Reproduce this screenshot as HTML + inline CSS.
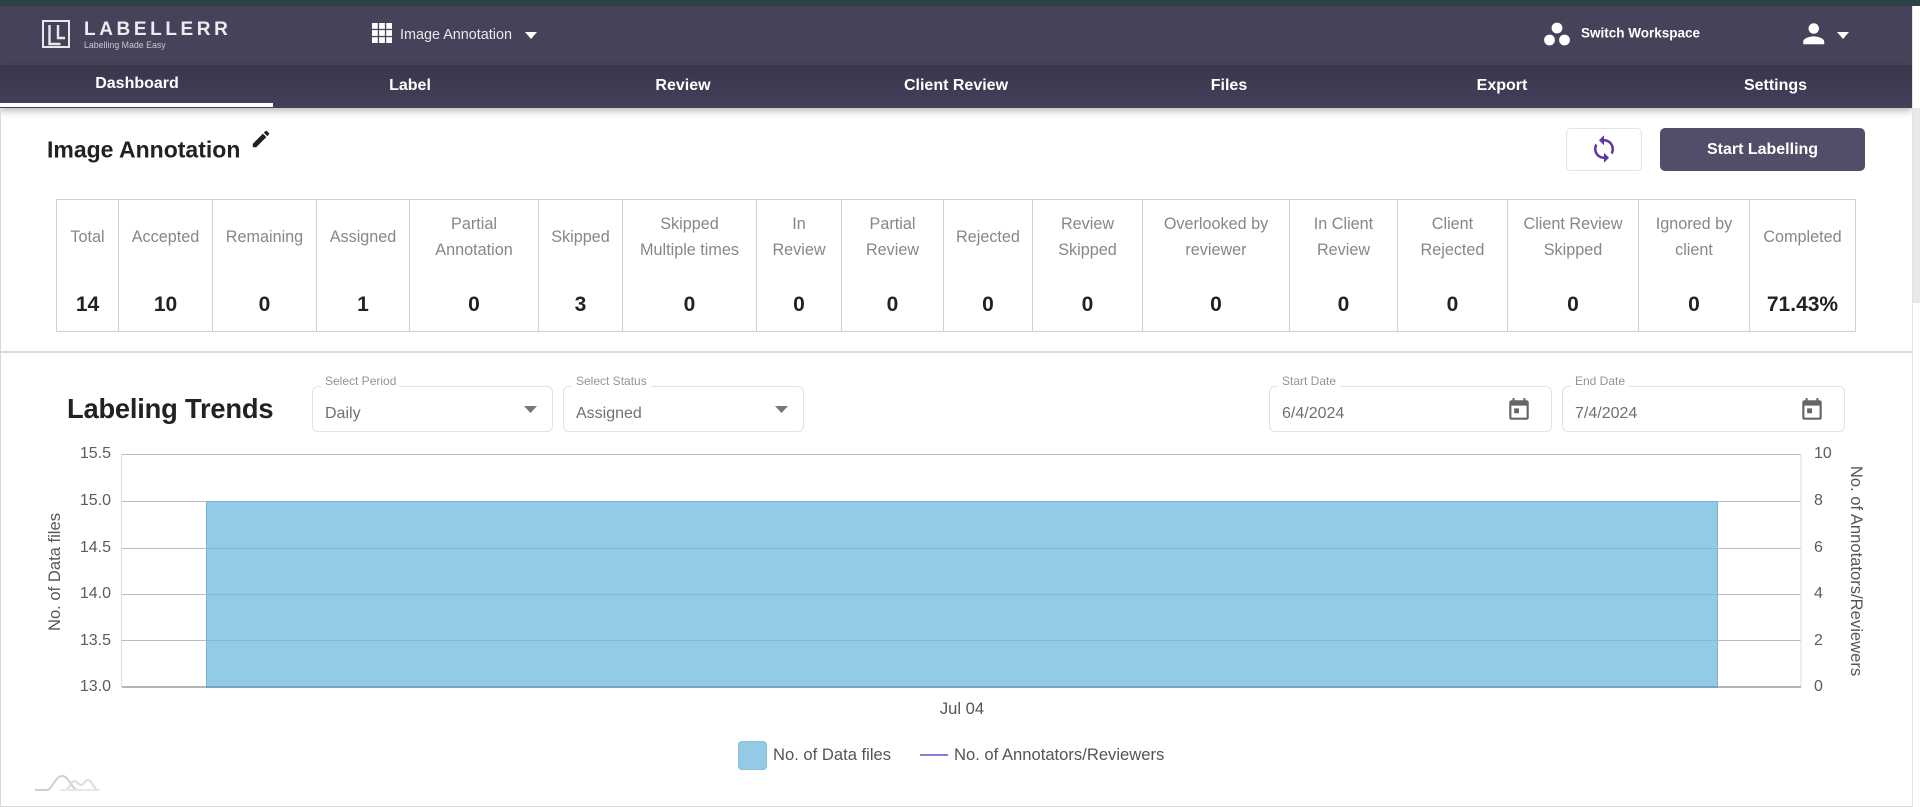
<!DOCTYPE html>
<html lang="en"><head><meta charset="utf-8"><title>Labellerr</title>
<style>
html,body{margin:0;padding:0;width:1920px;height:807px;overflow:hidden;background:#fff;font-family:"Liberation Sans",sans-serif}
.a{position:absolute;white-space:nowrap}
.c{transform:translate(-50%,-50%)}
.m{transform:translateY(-50%)}
.nav{top:86px;font-size:16px;font-weight:700;color:#fff}
.cell{position:absolute;top:199px;height:132px;border-right:1px solid #d0d0d0;box-sizing:border-box}
.lb{position:absolute;left:0;right:0;text-align:center;font-size:16.2px;color:#878787;line-height:26px;white-space:nowrap}
.v{position:absolute;left:0;right:0;top:92.500px;text-align:center;font-size:21px;font-weight:700;color:#222;line-height:26px}
.box{position:absolute;top:386px;height:46px;box-sizing:border-box;border:1px solid #e2e2e2;border-radius:6px;background:#fff}
.fl{position:absolute;top:374px;font-size:12px;color:#949494;background:#fff;padding:0 4px;line-height:14px}
.val{position:absolute;top:405px;font-size:16px;color:#707070;line-height:18px}
.tk{font-size:16px;color:#5c5c5c;line-height:18px}
.ax{font-size:16.600px;color:#555}
svg{position:absolute;display:block}
</style></head><body>
<div class="a" style="left:0;top:0;width:1920px;height:6px;background:#2a4445"></div>
<div class="a" style="left:0;top:6px;width:1912px;height:59px;background:linear-gradient(#45415a,#474359)"></div>
<div class="a" style="left:0;top:65px;width:1912px;height:43px;background:linear-gradient(#3a364b,#433f59);box-shadow:0 3px 7px rgba(0,0,0,.28)"></div>
<div class="a" style="left:0;top:103px;width:273px;height:4px;background:#fff"></div>
<div class="a" style="left:1912px;top:6px;width:8px;height:801px;background:#fff;border-left:1px solid #e4e4e4;box-sizing:border-box"></div>
<div class="a" style="left:1913px;top:108px;width:7px;height:195px;background:#e9e9e9"></div>
<div class="a" style="left:0;top:108px;width:1px;height:699px;background:#d8d8d8"></div>
<div class="a" style="left:0;top:806px;width:1912px;height:1px;background:#d8d8d8"></div>

<svg style="left:40px;top:18px" width="32" height="32" viewBox="0 0 32 32" fill="none" stroke="#e8e8ec"><rect x="3" y="3" width="26" height="26" stroke-width="2"/><path d="M9.500 7v19h11M18 7v13h7" stroke-width="2.400"/></svg>
<div class="a" style="left:84px;top:19px;font-size:19px;font-weight:700;line-height:22px;letter-spacing:3.600px;color:#ececf0">LABELLERR</div>
<div class="a" style="left:84px;top:39px;font-size:8.800px;line-height:12px;color:#c9c8d2">Labelling Made Easy</div>
<svg style="left:372px;top:23px" width="20" height="20" fill="#fff"><rect width="5.800" height="5.800"/><rect x="7.100" width="5.800" height="5.800"/><rect x="14.200" width="5.800" height="5.800"/><rect y="7.100" width="5.800" height="5.800"/><rect x="7.100" y="7.100" width="5.800" height="5.800"/><rect x="14.200" y="7.100" width="5.800" height="5.800"/><rect y="14.200" width="5.800" height="5.800"/><rect x="7.100" y="14.200" width="5.800" height="5.800"/><rect x="14.200" y="14.200" width="5.800" height="5.800"/></svg>
<div class="a m" style="left:400px;top:35px;font-size:14.400px;color:#e8e8ee">Image Annotation</div>
<svg style="left:525px;top:32px" width="12" height="7"><path d="M0 0h12L6 7z" fill="#fff"/></svg>
<svg style="left:1544px;top:22px" width="26" height="24" fill="#fff"><circle cx="13" cy="6" r="5.400"/><circle cx="5.500" cy="18" r="5.400"/><circle cx="20.500" cy="18" r="5.400"/></svg>
<div class="a m" style="left:1581px;top:33px;font-size:13.500px;font-weight:700;color:#fff">Switch Workspace</div>
<svg style="left:1798px;top:18px" width="31.500" height="31.500" viewBox="0 0 24 24" fill="#fff"><path d="M12 12c2.210 0 4-1.790 4-4s-1.790-4-4-4-4 1.790-4 4 1.790 4 4 4zm0 2c-2.670 0-8 1.340-8 4v2h16v-2c0-2.660-5.330-4-8-4z"/></svg>
<svg style="left:1837px;top:32px" width="12" height="7"><path d="M0 0h12L6 7z" fill="#fff"/></svg>

<div class="a nav c" style="left:137px;top:84px">Dashboard</div>
<div class="a nav c" style="left:410px">Label</div>
<div class="a nav c" style="left:683px">Review</div>
<div class="a nav c" style="left:956px">Client Review</div>
<div class="a nav c" style="left:1229px">Files</div>
<div class="a nav c" style="left:1502px">Export</div>
<div class="a nav c" style="left:1775.500px">Settings</div>

<div class="a m" style="left:47px;top:150px;font-size:23px;font-weight:700;color:#222">Image Annotation</div>
<svg style="left:250px;top:128px" width="22" height="22" viewBox="0 0 24 24" fill="#1f1f1f"><path d="M3 17.250V21h3.750L17.810 9.940l-3.750-3.750L3 17.250zM20.710 7.040c.39-.39.39-1.020 0-1.410l-2.340-2.340a.9959.9959 0 00-1.410 0l-1.830 1.830 3.750 3.750 1.830-1.830z"/></svg>
<div class="a" style="left:1566px;top:128px;width:76px;height:43px;box-sizing:border-box;border:1px solid #e3e3e3;border-radius:5px;background:#fff"></div>
<svg style="left:1589px;top:134px" width="30" height="30" viewBox="0 0 24 24" fill="#5e35a8"><path d="M12 4V1L8 5l4 4V6c3.310 0 6 2.690 6 6 0 1.010-.25 1.970-.7 2.800l1.460 1.460C19.540 15.030 20 13.570 20 12c0-4.420-3.580-8-8-8zm0 14c-3.310 0-6-2.690-6-6 0-1.010.25-1.970.7-2.800L5.240 7.740C4.460 8.970 4 10.430 4 12c0 4.420 3.580 8 8 8v3l4-4-4-4v3z"/></svg>
<div class="a" style="left:1660px;top:128px;width:205px;height:43px;border-radius:5px;background:#524e69;color:#fff;font-size:16px;font-weight:700;text-align:center;line-height:44px">Start Labelling</div>

<div class="a" style="left:56px;top:199px;width:1800px;height:133px;box-sizing:border-box;border:1px solid #d0d0d0"></div>
<div class="cell" style="left:57px;width:62px"><div class="lb" style="top:25px">Total</div><div class="v">14</div></div>
<div class="cell" style="left:119px;width:94px"><div class="lb" style="top:25px">Accepted</div><div class="v">10</div></div>
<div class="cell" style="left:213px;width:104px"><div class="lb" style="top:25px">Remaining</div><div class="v">0</div></div>
<div class="cell" style="left:317px;width:93px"><div class="lb" style="top:25px">Assigned</div><div class="v">1</div></div>
<div class="cell" style="left:410px;width:129px"><div class="lb" style="top:12px">Partial<br>Annotation</div><div class="v">0</div></div>
<div class="cell" style="left:539px;width:84px"><div class="lb" style="top:25px">Skipped</div><div class="v">3</div></div>
<div class="cell" style="left:623px;width:134px"><div class="lb" style="top:12px">Skipped<br>Multiple times</div><div class="v">0</div></div>
<div class="cell" style="left:757px;width:85px"><div class="lb" style="top:12px">In<br>Review</div><div class="v">0</div></div>
<div class="cell" style="left:842px;width:102px"><div class="lb" style="top:12px">Partial<br>Review</div><div class="v">0</div></div>
<div class="cell" style="left:944px;width:89px"><div class="lb" style="top:25px">Rejected</div><div class="v">0</div></div>
<div class="cell" style="left:1033px;width:110px"><div class="lb" style="top:12px">Review<br>Skipped</div><div class="v">0</div></div>
<div class="cell" style="left:1143px;width:147px"><div class="lb" style="top:12px">Overlooked by<br>reviewer</div><div class="v">0</div></div>
<div class="cell" style="left:1290px;width:108px"><div class="lb" style="top:12px">In Client<br>Review</div><div class="v">0</div></div>
<div class="cell" style="left:1398px;width:110px"><div class="lb" style="top:12px">Client<br>Rejected</div><div class="v">0</div></div>
<div class="cell" style="left:1508px;width:131px"><div class="lb" style="top:12px">Client Review<br>Skipped</div><div class="v">0</div></div>
<div class="cell" style="left:1639px;width:111px"><div class="lb" style="top:12px">Ignored by<br>client</div><div class="v">0</div></div>
<div class="cell" style="left:1750px;width:105px;border-right:0"><div class="lb" style="top:25px">Completed</div><div class="v">71.43%</div></div>

<div class="a" style="left:1px;top:351px;width:1911px;height:2px;background:#dcdcdc"></div>

<div class="a m" style="left:67px;top:409px;font-size:27.300px;font-weight:700;color:#222;letter-spacing:-.2px">Labeling Trends</div>
<div class="box" style="left:312px;width:241px"></div><div class="fl" style="left:321px">Select Period</div><div class="val" style="left:325px">Daily</div>
<svg style="left:524px;top:406px" width="13" height="7"><path d="M0 0h13L6.500 7z" fill="#777"/></svg>
<div class="box" style="left:563px;width:241px"></div><div class="fl" style="left:572px">Select Status</div><div class="val" style="left:576px">Assigned</div>
<svg style="left:775px;top:406px" width="13" height="7"><path d="M0 0h13L6.500 7z" fill="#777"/></svg>
<div class="box" style="left:1269px;width:283px"></div><div class="fl" style="left:1278px">Start Date</div><div class="val" style="left:1282px">6/4/2024</div>
<svg style="left:1506px;top:397px" width="26" height="26" viewBox="0 0 24 24" fill="#666"><path d="M12 10.500H7.500V15H12zM16 1v2H8V1H6v2H5c-1.110 0-1.990.9-1.990 2L3 19c0 1.100.89 2 2 2h14c1.100 0 2-.9 2-2V5c0-1.100-.9-2-2-2h-1V1h-2zm3 18H5V8h14v11z"/></svg>
<div class="box" style="left:1562px;width:283px"></div><div class="fl" style="left:1571px">End Date</div><div class="val" style="left:1575px">7/4/2024</div>
<svg style="left:1799px;top:397px" width="26" height="26" viewBox="0 0 24 24" fill="#666"><path d="M12 10.500H7.500V15H12zM16 1v2H8V1H6v2H5c-1.110 0-1.990.9-1.990 2L3 19c0 1.100.89 2 2 2h14c1.100 0 2-.9 2-2V5c0-1.100-.9-2-2-2h-1V1h-2zm3 18H5V8h14v11z"/></svg>

<svg style="left:0;top:440px" width="1920" height="260" viewBox="0 440 1920 260">
<rect x="206" y="501" width="1512" height="186" fill="#93cae6"/>
<path d="M206.500 501v186M1717.500 501v186M206 501.500h1512" stroke="#74b3d5" fill="none"/>
<path d="M122 454.500h1679M122 501.500h84M1718 501.500h83M122 548.500h84M1718 548.500h83M122 594.500h84M1718 594.500h83M122 640.500h84M1718 640.500h83" stroke="#bdbdbd" fill="none"/>
<path d="M206 548.500h1512M206 594.500h1512M206 640.500h1512" stroke="#82b9d6" fill="none"/>
<path d="M121.500 454v233M1801 454v233" stroke="#dedede" fill="none"/>
<path d="M122 687h84M1718 687h83" stroke="#b5b5b5" stroke-width="2" fill="none"/>
<path d="M206 687h1512" stroke="#7ba4ba" stroke-width="2" fill="none"/>
</svg>
<div class="a tk" style="right:1809px;top:445px">15.5</div>
<div class="a tk" style="right:1809px;top:492px">15.0</div>
<div class="a tk" style="right:1809px;top:539px">14.5</div>
<div class="a tk" style="right:1809px;top:585px">14.0</div>
<div class="a tk" style="right:1809px;top:632px">13.5</div>
<div class="a tk" style="right:1809px;top:678px">13.0</div>
<div class="a tk" style="left:1814px;top:445px">10</div>
<div class="a tk" style="left:1814px;top:492px">8</div>
<div class="a tk" style="left:1814px;top:539px">6</div>
<div class="a tk" style="left:1814px;top:585px">4</div>
<div class="a tk" style="left:1814px;top:632px">2</div>
<div class="a tk" style="left:1814px;top:678px">0</div>
<div class="a ax" style="left:55px;top:572px;transform:translate(-50%,-50%) rotate(-90deg)">No. of Data files</div>
<div class="a ax" style="left:1856px;top:571px;transform:translate(-50%,-50%) rotate(90deg)">No. of Annotators/Reviewers</div>
<div class="a ax c" style="left:962px;top:708.500px">Jul 04</div>
<div class="a" style="left:738px;top:741px;width:29px;height:29px;border-radius:4px;background:#93cae6;border:1px solid #86c0de;box-sizing:border-box"></div>
<div class="a ax m" style="left:773px;top:755px">No. of Data files</div>
<div class="a" style="left:920px;top:754px;width:28px;height:2px;background:#8080d8"></div>
<div class="a ax m" style="left:954px;top:755px">No. of Annotators/Reviewers</div>

<svg style="left:30px;top:765px" width="80" height="35" fill="none" stroke-width="2"><path d="M5 25h12c5 0 8-14 15-14 7 0 10 14 16 14h4" stroke="#cfcfcf"/><path d="M36 25c4-2 5-9 8-9 3 0 5 4 7 4 3 0 4-5 7-5 4 0 6 10 10 10h2" stroke="#dcdcdc"/><path d="M30 25h40" stroke="#e6e6e6"/></svg>
</body></html>
